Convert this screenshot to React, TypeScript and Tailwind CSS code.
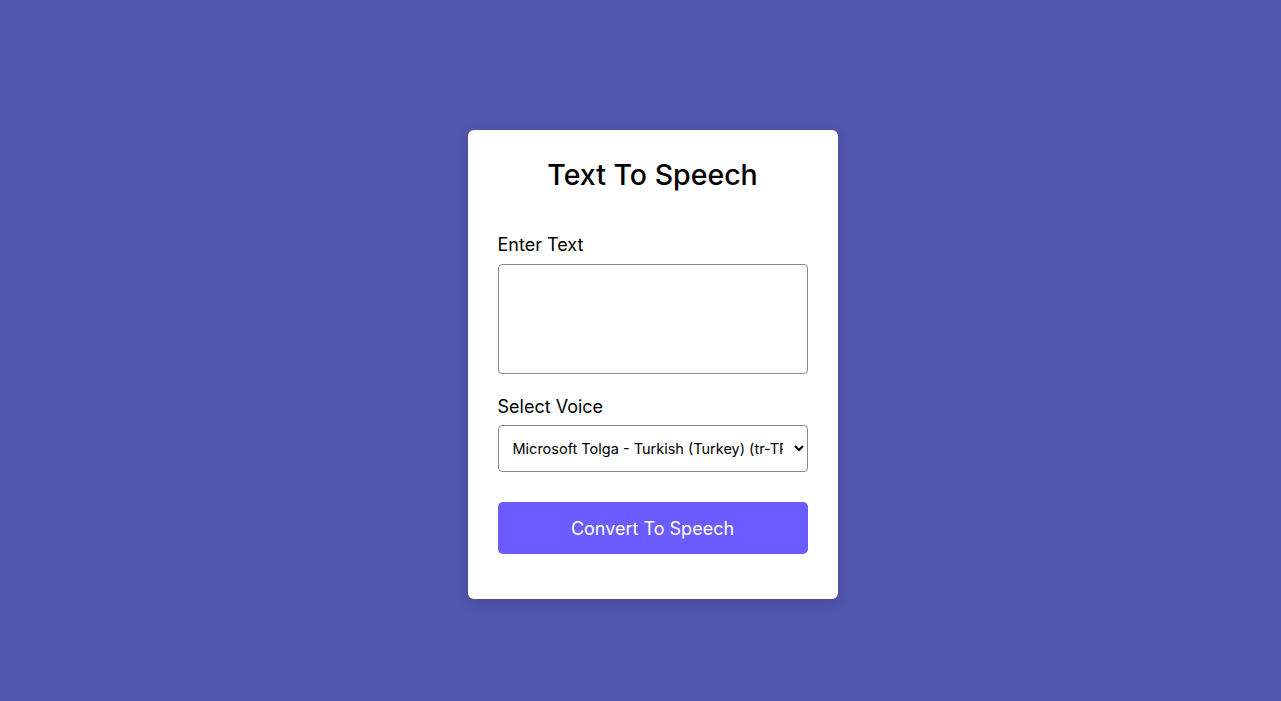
import { useState } from "react";

const voices = [
  "Microsoft Tolga - Turkish (Turkey) (tr-TR)",
  "Microsoft David - English (United States) (en-US)",
  "Microsoft Zira - English (United States) (en-US)",
];

const App = () => {
  const [text, setText] = useState("");
  const [voice, setVoice] = useState(voices[0]);

  const handleSpeak = (e: React.FormEvent) => {
    e.preventDefault();
    console.log(text, voice);
  };

  return (
    <div className="min-h-screen w-full bg-[#5256ad] flex justify-center items-start pt-[130px] pl-[24px] font-['Inter',sans-serif]">
      <form
        onSubmit={handleSpeak}
        className="w-[370px] bg-white rounded-[6px] shadow-[0_4px_12px_rgba(0,0,0,0.15)] px-[30px] pt-[28px] pb-[45px] flex flex-col"
      >
        <h1 className="text-[28.5px] leading-[34px] font-medium text-black text-center">
          Text To Speech
        </h1>

        <label className="mt-[41px] text-[18px] leading-[24px] text-black">
          Enter Text
        </label>
        <textarea
          className="mt-[7px] h-[110px] w-full border border-[#8a8a8a] rounded-[4px] p-2 text-sm resize-none outline-none"
          value={text}
          onChange={e => setText(e.target.value)}
        />

        <label className="mt-[21px] text-[18px] leading-[24px] text-black">
          Select Voice
        </label>
        <select
          className="mt-[6px] h-[47px] w-full border border-[#8a8a8a] rounded-[4px] pl-[10px] pr-[8px] text-[14.5px] text-black bg-white outline-none"
          value={voice}
          onChange={e => setVoice(e.target.value)}
        >
          {voices.map(v => (
            <option key={v} value={v}>
              {v}
            </option>
          ))}
        </select>

        <button
          type="submit"
          className="mt-[30px] h-[52px] w-full bg-[#6a5cff] text-white text-[18px] rounded-[5px]"
        >
          Convert To Speech
        </button>
      </form>
    </div>
  );
};

export default App;
